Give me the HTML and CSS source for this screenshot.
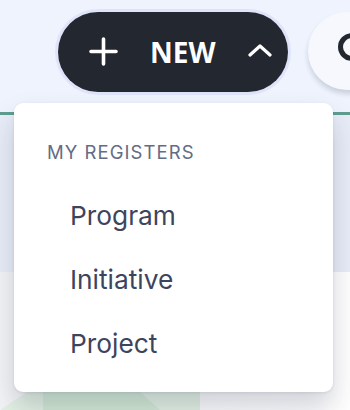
FILE: index.html
```html
<!DOCTYPE html>
<html lang="en">
<head>
<meta charset="utf-8">
<title>New menu</title>
<link rel="stylesheet" href="styles.css">
</head>
<body>
<div class="page">
  <header class="header">
    <button class="new-btn" type="button">
      <svg class="plus" width="29" height="29" viewBox="0 0 29 29" aria-hidden="true">
        <path d="M14.5 2 V27 M2 14.5 H27" fill="none" stroke="#fff" stroke-width="3.6" stroke-linecap="round"/>
      </svg>
      <span class="new-label">NEW</span>
      <svg class="chev" width="24" height="13" viewBox="0 0 24 13" aria-hidden="true">
        <path d="M2 11 L12 2 L22 11" fill="none" stroke="#fff" stroke-width="3.2" stroke-linecap="round" stroke-linejoin="round"/>
      </svg>
    </button>
    <button class="round-btn" type="button" aria-label="Search">
      <svg class="search" width="42" height="42" viewBox="0 0 42 42" aria-hidden="true">
        <circle cx="16" cy="15" r="11.5" fill="none" stroke="#23272f" stroke-width="5"/>
      </svg>
    </button>
  </header>
  <div class="band"></div>
  <div class="content">
    <svg class="hill" width="200" height="60" viewBox="0 0 200 60" aria-hidden="true">
      <polygon points="0,60 45,30 200,30 200,60" fill="#e3f1e4"/>
      <polygon points="43,22 118,22 160,60 43,60" fill="#d4ead6"/>
    </svg>
  </div>

  <div class="menu">
    <div class="menu-heading">MY REGISTERS</div>
    <a class="menu-item" href="#">Program</a>
    <a class="menu-item" href="#">Initiative</a>
    <a class="menu-item" href="#">Project</a>
  </div>
</div>
</body>
</html>
```

FILE: styles.css
```css
html, body {
  margin: 0;
  padding: 0;
}

body {
  width: 350px;
  height: 410px;
  overflow: hidden;
  background: #ffffff;
  font-family: Inter, "Noto Sans", sans-serif;
}

.page {
  position: relative;
  width: 350px;
  height: 410px;
  overflow: hidden;
}

.header {
  height: 112px;
  background: #eef3fd;
  border-bottom: 3px solid #5e9e8f;
  box-sizing: content-box;
  display: flex;
  align-items: flex-start;
  padding-left: 58px;
  gap: 20px;
}

.new-btn {
  margin-top: 12px;
  flex-shrink: 0;
  width: 230px;
  height: 80px;
  border: none;
  border-radius: 40px;
  background: #23272f;
  box-shadow: 0 0 0 3px #dfe4fb;
  display: flex;
  align-items: center;
  padding: 0 0 0 31px;
  box-sizing: border-box;
  cursor: pointer;
}

.plus {
  display: block;
  flex-shrink: 0;
  margin-top: -1px;
}

.new-label {
  margin-left: 32px;
  font-family: "Open Sans", "Noto Sans", sans-serif;
  font-weight: 700;
  font-size: 28px;
  line-height: 38px;
  color: #ffffff;
}

.chev {
  display: block;
  margin-left: 32px;
  margin-top: -3px;
}

.round-btn {
  margin-top: 12px;
  flex-shrink: 0;
  width: 78px;
  height: 78px;
  border: none;
  border-radius: 50%;
  background: #f6f8fe;
  box-shadow: 0 4px 5px rgba(40, 50, 80, 0.18);
  padding: 0 0 0 28px;
  display: flex;
  align-items: center;
  box-sizing: border-box;
  cursor: pointer;
}

.search {
  display: block;
  margin-top: 4px;
}

.band {
  height: 157px;
  background: #e8edf8;
}

.content {
  position: relative;
  height: 138px;
  background: linear-gradient(90deg, #f3f4f6 0%, #fbfbfc 40%, #ffffff 100%);
}

.hill {
  position: absolute;
  left: 0;
  bottom: 0;
  display: block;
}

.menu {
  position: absolute;
  left: 14px;
  top: 103px;
  width: 319px;
  box-sizing: border-box;
  padding: 37px 0 16px 0;
  background: #ffffff;
  border-radius: 9px;
  box-shadow: 0 16px 28px rgba(30, 40, 70, 0.2), 0 1px 3px rgba(30, 40, 70, 0.1);
  display: flex;
  flex-direction: column;
}

.menu-heading {
  padding-left: 33px;
  font-size: 18.5px;
  line-height: 24px;
  letter-spacing: 1.05px;
  color: #646b85;
  margin-bottom: 20px;
}

.menu-item {
  display: block;
  padding-left: 56px;
  font-size: 26.3px;
  line-height: 64px;
  color: #3d445d;
  text-decoration: none;
}
```
